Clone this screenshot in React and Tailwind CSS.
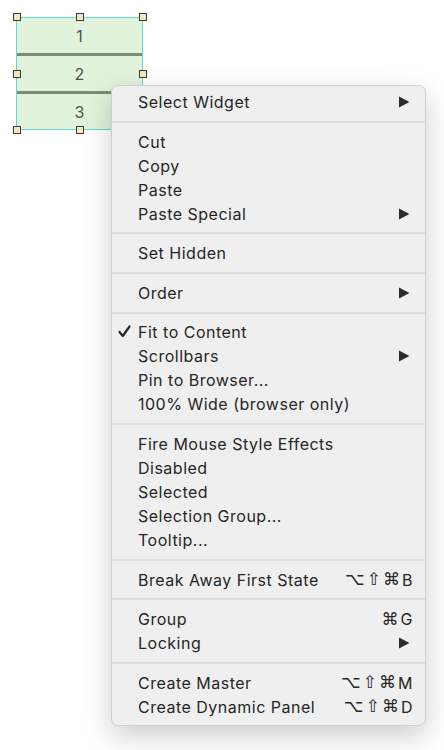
import React from "react";

const font = { fontFamily: 'Inter, "Noto Sans", "DejaVu Sans", sans-serif' };

function Handle({ cls }) {
  return (
    <div
      className={`absolute w-[8px] h-[8px] bg-[#f7e4bd] border border-[#3a3a3a] ${cls}`}
    />
  );
}

function Arrow() {
  return (
    <svg width="12" height="12" viewBox="0 0 12 12" className="mr-[3px]">
      <path d="M1 0.5 L11.5 6 L1 11.5 Z" fill="#2b2b2b" />
    </svg>
  );
}

function Shortcut({ keys }) {
  return (
    <span className="flex items-center gap-[2px] text-[#262626]">
      {keys.map((k, i) =>
        /[A-Z]/.test(k) ? (
          <span key={i} className="text-[16px] tracking-[0.5px]" style={font}>
            {k}
          </span>
        ) : (
          <span
            key={i}
            className="text-[17px]"
            style={{ fontFamily: '"DejaVu Sans", sans-serif' }}
          >
            {k}
          </span>
        )
      )}
    </span>
  );
}

function Item({ label, arrow, shortcut, checked }) {
  return (
    <div className="relative flex items-center h-[24px] pl-[26px] pr-[12px] text-[16px] text-[#262626] leading-none">
      {checked && (
        <svg
          width="13"
          height="13"
          viewBox="0 0 13 13"
          className="absolute left-[6px] top-[5px]"
        >
          <path
            d="M1.5 7 L4.8 11 L11.5 1.5"
            fill="none"
            stroke="#262626"
            strokeWidth="2.2"
            strokeLinecap="round"
            strokeLinejoin="round"
          />
        </svg>
      )}
      <span className="flex-1 tracking-[0.5px]">{label}</span>
      {arrow && <Arrow />}
      {shortcut && <Shortcut keys={shortcut} />}
    </div>
  );
}

function Sep() {
  return (
    <div className="h-[15.6px] flex items-center">
      <div className="w-full h-[2px] bg-[#dddddd]" />
    </div>
  );
}

export default function App() {
  return (
    <div className="relative w-[444px] h-[750px] bg-white overflow-hidden" style={font}>
      {/* widget on canvas */}
      <div className="absolute left-[16px] top-[17px] w-[127px] h-[113px] border-x-[1.5px] border-y border-[#5fd6d6] bg-[#e1f3db] flex flex-col">
        <div className="flex-1 flex items-center justify-center text-[16px] text-[#505050]">1</div>
        <div className="h-[3px] bg-[#7b8c75]" />
        <div className="flex-1 flex items-center justify-center text-[16px] text-[#505050]">2</div>
        <div className="h-[3px] bg-[#7b8c75]" />
        <div className="flex-1 flex items-center justify-center text-[16px] text-[#505050]">3</div>
      </div>
      <Handle cls="left-[13px] top-[13px]" />
      <Handle cls="left-[76px] top-[13px]" />
      <Handle cls="left-[139px] top-[13px]" />
      <Handle cls="left-[13px] top-[70px]" />
      <Handle cls="left-[139px] top-[70px]" />
      <Handle cls="left-[13px] top-[126px]" />
      <Handle cls="left-[76px] top-[126px]" />

      {/* context menu */}
      <div className="absolute left-[111px] top-[85px] w-[315px] rounded-[7px] bg-[#efefef] border border-[#cfcfcf] shadow-[0_10px_28px_rgba(0,0,0,0.2)] pt-[4px] pb-[6px]">
        <Item label="Select Widget" arrow />
        <Sep />
        <Item label="Cut" />
        <Item label="Copy" />
        <Item label="Paste" />
        <Item label="Paste Special" arrow />
        <Sep />
        <Item label="Set Hidden" />
        <Sep />
        <Item label="Order" arrow />
        <Sep />
        <Item label="Fit to Content" checked />
        <Item label="Scrollbars" arrow />
        <Item label="Pin to Browser..." />
        <Item label="100% Wide (browser only)" />
        <Sep />
        <Item label="Fire Mouse Style Effects" />
        <Item label="Disabled" />
        <Item label="Selected" />
        <Item label="Selection Group..." />
        <Item label="Tooltip..." />
        <Sep />
        <Item label="Break Away First State" shortcut={["⌥", "⇧", "⌘", "B"]} />
        <Sep />
        <Item label="Group" shortcut={["⌘", "G"]} />
        <Item label="Locking" arrow />
        <Sep />
        <Item label="Create Master" shortcut={["⌥", "⇧", "⌘", "M"]} />
        <Item label="Create Dynamic Panel" shortcut={["⌥", "⇧", "⌘", "D"]} />
      </div>
    </div>
  );
}
